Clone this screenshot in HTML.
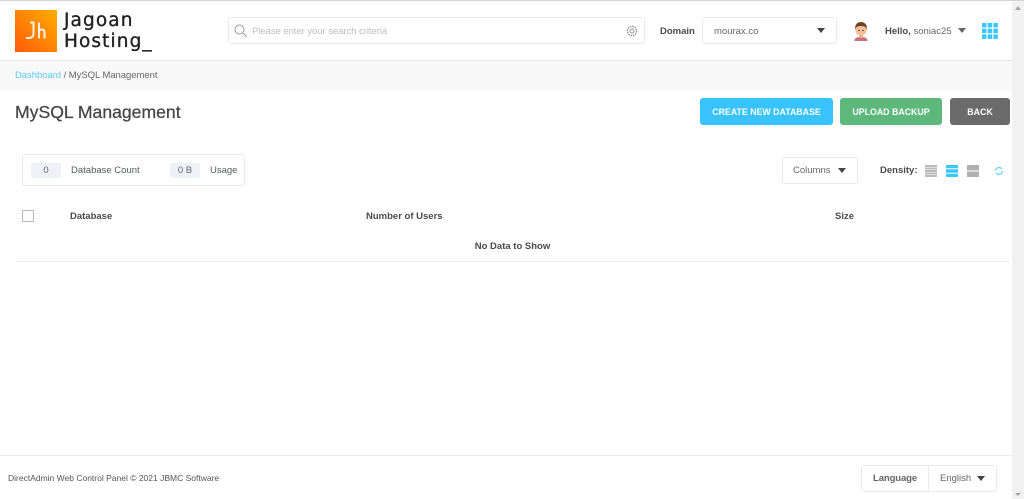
<!DOCTYPE html>
<html>
<head>
<meta charset="utf-8">
<style>
html,body{margin:0;padding:0;width:1024px;height:499px;overflow:hidden;background:#fff;font-family:"Liberation Sans",sans-serif;color:#55595c}
.a{position:absolute;white-space:nowrap}
.b{box-sizing:border-box;border:1px solid #e8eaec;border-radius:3px;background:#fff}
.btn{position:absolute;box-sizing:border-box;top:98px;height:27px;border-radius:3px;color:#fff;font-weight:bold;font-size:8.8px;line-height:28px;text-align:center}
.caret{position:absolute;width:0;height:0;border-left:4.5px solid transparent;border-right:4.5px solid transparent;border-top:5px solid #444}
.t{font-size:9.5px;line-height:12px}
.bold{font-weight:bold;color:#4a4a4a}
</style>
</head>
<body>
<div class="a" style="left:0;top:0;width:1024px;height:1px;background:#d4d4d4"></div>
<!-- scrollbar -->
<div class="a" style="left:1012px;top:1px;width:12px;height:498px;background:#f1f1f1"></div>
<div class="a" style="left:1015px;top:6px;width:0;height:0;border-left:3px solid transparent;border-right:3px solid transparent;border-bottom:4px solid #a3a3a3"></div>
<div class="a" style="left:1015px;top:493px;width:0;height:0;border-left:3px solid transparent;border-right:3px solid transparent;border-top:3px solid #a3a3a3"></div>

<!-- logo -->
<svg class="a" style="left:15px;top:10px" width="42" height="42" viewBox="0 0 42 42">
<defs><linearGradient id="g" x1="0" y1="1" x2="1" y2="0"><stop offset="0" stop-color="#ff5a0a"/><stop offset="1" stop-color="#ffae00"/></linearGradient></defs>
<rect width="42" height="42" fill="url(#g)"/>
<path d="M15 12.500h3.500v11c0 3-2 4.500-4.500 4.500h-3M24 12.500v16M24 20.500c3-2 5.500-1 5.500 2v6" fill="none" stroke="#fff" stroke-width="2" opacity=".88"/>
</svg>
<div class="a" style="left:64px;top:10px;font-size:18.5px;line-height:21px;color:#222;letter-spacing:1.1px;font-family:'DejaVu Sans',sans-serif;-webkit-text-stroke:.35px #222">Jagoan<br>Hosting_</div>

<!-- search -->
<div class="a b" style="left:228px;top:17px;width:417px;height:27px"></div>
<svg class="a" style="left:234px;top:24px" width="13" height="13" viewBox="0 0 13 13"><circle cx="5.500" cy="5.500" r="4.500" fill="none" stroke="#999" stroke-width="1"/><path d="M9 9l3.500 3.500" stroke="#999"/></svg>
<div class="a t" style="left:252px;top:26px;color:#bdbdbd;letter-spacing:-.05px">Please enter your search criteria</div>
<svg class="a" style="left:626px;top:25px" width="12" height="12" viewBox="0 0 12 12"><circle cx="6" cy="6" r="4.600" fill="none" stroke="#999" stroke-width="1.400" stroke-dasharray="1.600 .8"/><circle cx="6" cy="6" r="2" fill="none" stroke="#999" stroke-width="1"/></svg>

<div class="a t bold" style="left:660px;top:26px">Domain</div>
<div class="a b" style="left:702px;top:17px;width:135px;height:27px"></div>
<div class="a t" style="left:714px;top:26px;color:#666">mourax.co</div>
<div class="caret" style="left:817px;top:28px"></div>

<!-- avatar -->
<svg class="a" style="left:852px;top:21px" width="18" height="20" viewBox="0 0 18 20">
<path d="M2.500 20c0-3 2-4 6.500-4s6.500 1 6.500 4z" fill="#c9707e"/>
<rect x="7" y="13" width="4" height="4" fill="#eab08a"/>
<ellipse cx="9" cy="8.500" rx="5.800" ry="6.200" fill="#f3c29d"/>
<path d="M3.200 8.500C2.500 3 6 1 9 1s6.500 2 5.800 7.500C14 5.500 12 5 9 5S4 5.500 3.200 8.500z" fill="#6e4022"/>
<circle cx="7" cy="9.500" r=".7" fill="#333"/><circle cx="11" cy="9.500" r=".7" fill="#333"/>
</svg>
<div class="a t" style="left:885px;top:26px;color:#666"><b style="color:#4a4a4a">Hello,</b> soniac25</div>
<div class="caret" style="left:958px;top:28px;border-top-color:#666"></div>

<!-- grid -->
<svg class="a" style="left:982px;top:23px" width="16" height="16" viewBox="0 0 16 16" fill="#3cc6fd">
<rect x="0" y="0" width="4.500" height="4.500"/><rect x="5.700" y="0" width="4.500" height="4.500"/><rect x="11.400" y="0" width="4.500" height="4.500"/>
<rect x="0" y="5.700" width="4.500" height="4.500"/><rect x="5.700" y="5.700" width="4.500" height="4.500"/><rect x="11.400" y="5.700" width="4.500" height="4.500"/>
<rect x="0" y="11.400" width="4.500" height="4.500"/><rect x="5.700" y="11.400" width="4.500" height="4.500"/><rect x="11.400" y="11.400" width="4.500" height="4.500"/>
</svg>

<!-- breadcrumb -->
<div class="a" style="left:0;top:60px;width:1012px;height:31px;background:#f9f9f9;border-top:1px solid #e6e6e6;box-sizing:border-box"></div>
<div class="a t" style="left:15px;top:70px;color:#666;letter-spacing:-.05px"><span style="color:#5cc8fa">Dashboard</span> / MySQL Management</div>

<!-- title -->
<div class="a" style="left:15px;top:101px;font-size:17.6px;line-height:22px;color:#444;-webkit-text-stroke:.25px #444">MySQL Management</div>

<div class="btn" style="left:700px;width:133px;background:#38c3fe">CREATE NEW DATABASE</div>
<div class="btn" style="left:840px;width:102px;background:#5eb87c">UPLOAD BACKUP</div>
<div class="btn" style="left:950px;width:60px;background:#6b6b6b">BACK</div>

<!-- stats -->
<div class="a b" style="left:22px;top:154px;width:223px;height:32px"></div>
<div class="a t" style="left:31px;top:163px;width:30px;height:15px;line-height:15px;background:#eef2f6;border-radius:2px;text-align:center;color:#666">0</div>
<div class="a t" style="left:71px;top:165px">Database Count</div>
<div class="a t" style="left:170px;top:163px;width:30px;height:15px;line-height:15px;background:#eef2f6;border-radius:2px;text-align:center;color:#666">0 B</div>
<div class="a t" style="left:210px;top:165px">Usage</div>

<!-- columns -->
<div class="a b" style="left:782px;top:157px;width:76px;height:27px"></div>
<div class="a t" style="left:793px;top:165px;color:#666">Columns</div>
<div class="caret" style="left:838px;top:168px"></div>
<div class="a t bold" style="left:880px;top:165px">Density:</div>
<svg class="a" style="left:925px;top:165px" width="12" height="12" viewBox="0 0 12 12" fill="#bbb"><rect y="0" width="12" height="2"/><rect y="2.500" width="12" height="2"/><rect y="5" width="12" height="2"/><rect y="7.500" width="12" height="2"/><rect y="10" width="12" height="2"/></svg>
<svg class="a" style="left:946px;top:165px" width="12" height="12" viewBox="0 0 12 12" fill="#3cc6fd"><rect y="0" width="12" height="3.300"/><rect y="4.300" width="12" height="3.400"/><rect y="8.700" width="12" height="3.300"/></svg>
<svg class="a" style="left:967px;top:165px" width="12" height="12" viewBox="0 0 12 12" fill="#b0b0b0"><rect y="0" width="12" height="5.500"/><rect y="6.500" width="12" height="5.500"/></svg>
<svg class="a" style="left:994px;top:166px" width="10" height="10" viewBox="0 0 10 10"><circle cx="5" cy="5" r="3.500" fill="none" stroke="#6fd0fb" stroke-width="1.200" stroke-dasharray="9 2"/></svg>

<!-- table -->
<div class="a" style="left:22px;top:210px;width:12px;height:12px;box-sizing:border-box;border:1px solid #bbb;background:#fff"></div>
<div class="a t bold" style="left:70px;top:211px">Database</div>
<div class="a t bold" style="left:366px;top:211px">Number of Users</div>
<div class="a t bold" style="left:835px;top:211px">Size</div>
<div class="a t bold" style="left:15px;top:241px;width:995px;text-align:center">No Data to Show</div>
<div class="a" style="left:15px;top:261px;width:995px;height:1px;background:#ececec"></div>

<!-- footer -->
<div class="a" style="left:0;top:455px;width:1012px;height:1px;background:#ececec"></div>
<div class="a" style="left:8px;top:472px;font-size:8.5px;line-height:12px;color:#555">DirectAdmin Web Control Panel © 2021 JBMC Software</div>
<div class="a b" style="left:861px;top:465px;width:136px;height:27px"></div>
<div class="a" style="left:928px;top:465px;width:1px;height:27px;background:#e8eaec"></div>
<div class="a t bold" style="left:873px;top:473px;color:#666;letter-spacing:-.1px">Language</div>
<div class="a t" style="left:940px;top:473px;color:#666">English</div>
<div class="caret" style="left:977px;top:476px"></div>
</body>
</html>
